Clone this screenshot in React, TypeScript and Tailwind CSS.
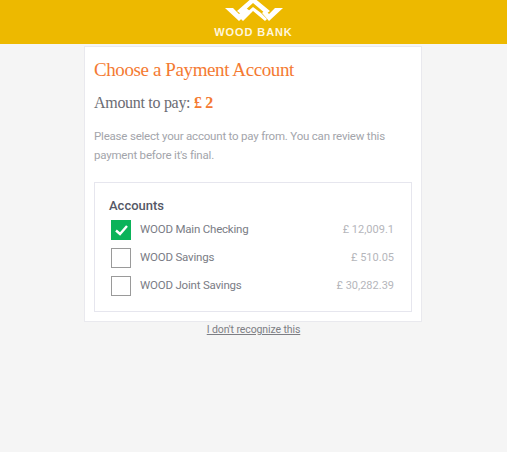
import React from 'react';

const accounts = [
  { name: 'WOOD Main Checking', balance: '£ 12,009.1', checked: true },
  { name: 'WOOD Savings', balance: '£ 510.05', checked: false },
  { name: 'WOOD Joint Savings', balance: '£ 30,282.39', checked: false },
];

const Logo = () => (
  <svg width="60" height="23" viewBox="0 0 60 23" fill="white">
    <path d="M1 8 L9 8 L15 14 L22 8 L26 11 L15 21 Z" />
    <path d="M22 13 L29 7 L37 13 L43 19 L41 21 L29 11 L19 21 L16 18 Z" />
    <path d="M59 8 L51 8 L45 14 L41 10 L38 13 L45 21 Z" />
    <path d="M13 11 L29 -3 L46 11 L42 14 L29 3 L17 14 Z" />
  </svg>
);

export default function App() {
  return (
    <div className="min-h-[452px] bg-[#f5f5f5] font-['Roboto',sans-serif]">
      <header className="h-11 bg-[#edb900] flex flex-col items-center overflow-hidden">
        <Logo />
        <div className="text-[11px] leading-[12px] mt-[3px] font-bold tracking-[0.9px] text-[#fff6dc] font-['Liberation_Sans',sans-serif]">WOOD BANK</div>
      </header>
      <main className="w-[338px] mt-[2px] ml-[84px] bg-white border border-[#e9e9ee] px-[9px] pt-[12px] pb-[9px]">
        <h1 className="text-[19px] leading-[22px] tracking-[-0.4px] text-[#f47a32] font-['Liberation_Serif',serif]">Choose a Payment Account</h1>
        <p className="mt-[12px] text-[16px] leading-[20px] tracking-[-0.3px] text-[#6b6c73] font-['Liberation_Serif',serif]">
          Amount to pay: <span className="font-bold text-[#f47a32]">£ 2</span>
        </p>
        <p className="mt-[14px] text-[11.5px] leading-[19px] tracking-[-0.2px] text-[#a3a5ab]">
          Please select your account to pay from. You can review this payment before it's final.
        </p>
        <section className="mt-[17px] border border-[#e6e6ee] px-[14px] pt-[14px] pb-[15px]">
          <h2 className="text-[13px] leading-[18px] font-medium text-[#555866]">Accounts</h2>
          <ul className="mt-[5px] flex flex-col gap-[8px]">
            {accounts.map((a) => (
              <li key={a.name} className="flex items-center h-[20px] pl-[2px]">
                {a.checked ? (
                  <span className="w-[20px] h-[20px] bg-[#0bb35a] flex items-center justify-center">
                    <svg width="13" height="11" viewBox="0 0 13 11" fill="none" stroke="white" strokeWidth="2.4">
                      <path d="M1 5.5 L5 9 L12 1" />
                    </svg>
                  </span>
                ) : (
                  <span className="w-[20px] h-[20px] bg-white border border-[#9a9a9a]" />
                )}
                <span className="ml-[9px] flex-1 text-[11.5px] tracking-[-0.2px] text-[#7a7c85]">{a.name}</span>
                <span className="pr-[3px] text-[11px] text-[#b5b6bb]">{a.balance}</span>
              </li>
            ))}
          </ul>
        </section>
      </main>
      <div className="text-center leading-[14px] mt-[-1px]">
        <a className="text-[10.5px] leading-[14px] tracking-[-0.1px] text-[#7d7e84] underline">I don't recognize this</a>
      </div>
    </div>
  );
}
